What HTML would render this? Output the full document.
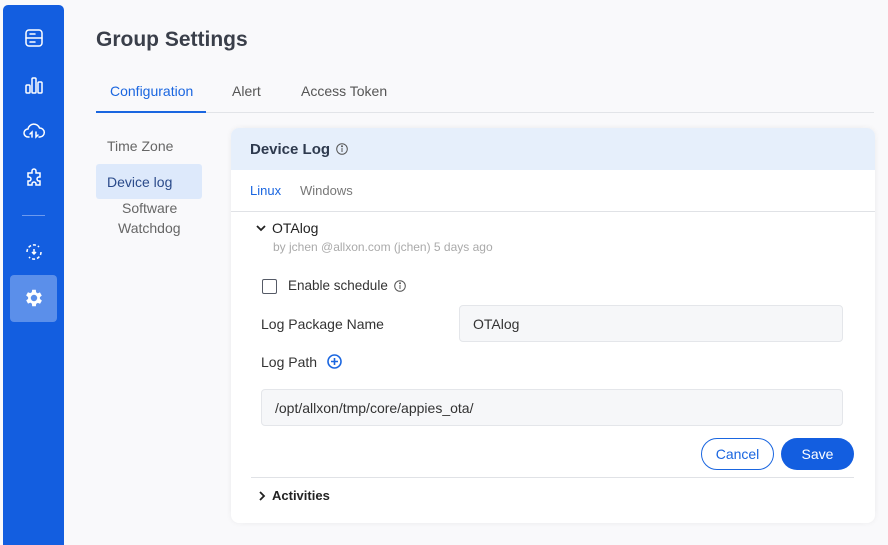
<!DOCTYPE html>
<html><head><meta charset="utf-8"><style>
*{box-sizing:border-box;margin:0;padding:0}
body{width:888px;height:533px;background:#f9f9fb;font-family:"Liberation Sans",sans-serif;position:relative;overflow:hidden;color:#333}
.sb{position:absolute;left:3px;top:5px;width:61px;height:540px;background:#135ee0;border-radius:5px 5px 0 0}
.ic{position:absolute;left:20px;width:22px;height:22px}
.abs{position:absolute;white-space:nowrap}
.card{position:absolute;left:231px;top:128px;width:644px;height:395px;background:#fff;border-radius:8px;box-shadow:0 0 6px rgba(0,0,0,.06);overflow:hidden}
.inp{position:absolute;background:#f6f7f9;border:1px solid #e4e6ea;border-radius:4px;font-size:14px;color:#333;padding-left:13px;display:flex;align-items:center}
</style></head><body>
<div class="sb">
<svg class="ic" style="top:22px" viewBox="0 0 22 22" fill="none" stroke="#fff" stroke-width="1.5" stroke-linecap="round"><rect x="3" y="3" width="16" height="16" rx="3"/><line x1="3" y1="11" x2="19" y2="11"/><line x1="7" y1="7" x2="12" y2="7"/><line x1="7" y1="15" x2="12" y2="15"/></svg>
<svg class="ic" style="top:69px" viewBox="0 0 22 22" fill="none" stroke="#fff" stroke-width="1.5"><rect x="3" y="11" width="4" height="8" rx="1"/><rect x="9" y="4" width="4" height="15" rx="1"/><rect x="15" y="8" width="4" height="11" rx="1"/></svg>
<svg class="ic" style="top:115px" viewBox="0 0 22 22" fill="none" stroke="#fff" stroke-width="1.5" stroke-linecap="round"><path d="M6 17H5a4 4 0 0 1 0-8 6 6 0 0 1 11.5-1A4.5 4.5 0 0 1 17 17h-1"/><path d="M9 17v-5l-2 2M13 12v5l2-2"/></svg>
<svg class="ic" style="top:162px" viewBox="0 0 22 22" fill="none" stroke="#fff" stroke-width="1.5"><path d="M9 4a2 2 0 0 1 4 0v2h4v4h-1a2 2 0 0 0 0 4h1v4h-4v-1a2 2 0 0 0-4 0v1H5v-4h1a2 2 0 0 0 0-4H5V6h4z"/></svg>
<div style="position:absolute;left:19px;top:210px;width:23px;height:1px;background:#6d9aee"></div>
<svg class="ic" style="top:236px" viewBox="0 0 22 22" fill="none" stroke="#fff" stroke-width="1.5"><path d="M4 11a7 7 0 0 1 12-5M18 11a7 7 0 0 1-12 5" stroke-dasharray="3 2"/><path d="M11 8v5M9 11l2 2 2-2"/></svg>
<div style="position:absolute;left:7px;top:270px;width:47px;height:47px;background:#5b8fea;border-radius:4px"></div>
<svg class="ic" style="top:282px" viewBox="0 0 24 24" fill="#fff"><path d="M19.4 13a7.5 7.5 0 0 0 0-2l2.1-1.6-2-3.5-2.5 1a7 7 0 0 0-1.7-1L15 3h-4l-.4 2.7a7 7 0 0 0-1.7 1l-2.5-1-2 3.5L6.6 11a7.5 7.5 0 0 0 0 2l-2.1 1.6 2 3.5 2.5-1a7 7 0 0 0 1.7 1L11 21h4l.4-2.7a7 7 0 0 0 1.7-1l2.5 1 2-3.5zM13 15.5a3.5 3.5 0 1 1 0-7 3.5 3.5 0 0 1 0 7z" transform="translate(-1 0)"/></svg>
</div>
<div class="abs" style="left:96px;top:28px;font-size:21px;font-weight:bold;color:#3a3f4a">Group Settings</div>
<div class="abs" style="left:110px;top:83px;font-size:14px;color:#1a66e0">Configuration</div>
<div class="abs" style="left:232px;top:83px;font-size:14px;color:#555">Alert</div>
<div class="abs" style="left:301px;top:83px;font-size:14px;color:#555">Access Token</div>
<div style="position:absolute;left:96px;top:112px;width:778px;height:1px;background:#e2e4e8"></div>
<div style="position:absolute;left:96px;top:111px;width:110px;height:2px;background:#1a66e0"></div>
<div class="abs" style="left:107px;top:138px;font-size:14px;color:#666">Time Zone</div>
<div style="position:absolute;left:96px;top:164px;width:106px;height:35px;background:#dde9fb;border-radius:3px"></div>
<div class="abs" style="left:107px;top:174px;font-size:14px;color:#2a4a8a">Device log</div>
<div class="abs" style="left:122px;top:200px;font-size:14px;color:#666">Software</div>
<div class="abs" style="left:118px;top:220px;font-size:14px;color:#666">Watchdog</div>
<div class="card">
<div style="height:42px;background:#e6effb"></div>
<div class="abs" style="left:19px;top:13px;font-size:15px;font-weight:bold;color:#2e3a4e">Device Log</div>
<svg style="position:absolute;left:105px;top:15px" width="12" height="12" viewBox="0 0 12 12" fill="none" stroke="#555" stroke-width="1"><circle cx="6" cy="6" r="5.3"/><line x1="6" y1="5" x2="6" y2="9"/><circle cx="6" cy="3.3" r=".5" fill="#555"/></svg>
<div class="abs" style="left:19px;top:55px;font-size:13px;color:#1a66e0">Linux</div>
<div class="abs" style="left:69px;top:55px;font-size:13px;color:#777">Windows</div>
<div style="position:absolute;left:0;top:83px;width:644px;height:1px;background:#e0e2e6"></div>
<svg style="position:absolute;left:25px;top:96px" width="10" height="8" viewBox="0 0 10 8" fill="none" stroke="#222" stroke-width="1.8"><path d="M1 2l4 4 4-4"/></svg>
<div class="abs" style="left:41px;top:92px;font-size:14px;color:#222">OTAlog</div>
<div class="abs" style="left:42px;top:112px;font-size:12px;color:#aaa">by jchen @allxon.com (jchen) 5 days ago</div>
<div style="position:absolute;left:31px;top:151px;width:15px;height:15px;border:1.5px solid #555a66;border-radius:2px"></div>
<div class="abs" style="left:57px;top:150px;font-size:13.5px;color:#333">Enable schedule</div>
<svg style="position:absolute;left:163px;top:152px" width="12" height="12" viewBox="0 0 12 12" fill="none" stroke="#555" stroke-width="1"><circle cx="6" cy="6" r="5.3"/><line x1="6" y1="5" x2="6" y2="9"/><circle cx="6" cy="3.3" r=".5" fill="#555"/></svg>
<div class="abs" style="left:30px;top:188px;font-size:14px;color:#333">Log Package Name</div>
<div class="inp" style="left:228px;top:177px;width:384px;height:37px">OTAlog</div>
<div class="abs" style="left:30px;top:226px;font-size:14px;color:#333">Log Path</div>
<svg style="position:absolute;left:96px;top:226px" width="15" height="15" viewBox="0 0 15 15" fill="none" stroke="#1a66e0" stroke-width="1.6"><circle cx="7.5" cy="7.5" r="6.5"/><path d="M7.5 4v7M4 7.5h7"/></svg>
<div class="inp" style="left:30px;top:261px;width:582px;height:37px">/opt/allxon/tmp/core/appies_ota/</div>
<div style="position:absolute;left:470px;top:310px;width:73px;height:32px;border:1.5px solid #1a66e0;border-radius:16px;color:#1a66e0;font-size:14px;display:flex;align-items:center;justify-content:center">Cancel</div>
<div style="position:absolute;left:550px;top:310px;width:73px;height:32px;background:#135ee0;border-radius:16px;color:#fff;font-size:14px;display:flex;align-items:center;justify-content:center">Save</div>
<div style="position:absolute;left:20px;top:349px;width:603px;height:1px;background:#e0e2e6"></div>
<svg style="position:absolute;left:27px;top:363px" width="8" height="10" viewBox="0 0 8 10" fill="none" stroke="#222" stroke-width="1.8"><path d="M2 1l4 4-4 4"/></svg>
<div class="abs" style="left:41px;top:360px;font-size:13px;font-weight:bold;color:#222">Activities</div>
</div>
</body></html>
